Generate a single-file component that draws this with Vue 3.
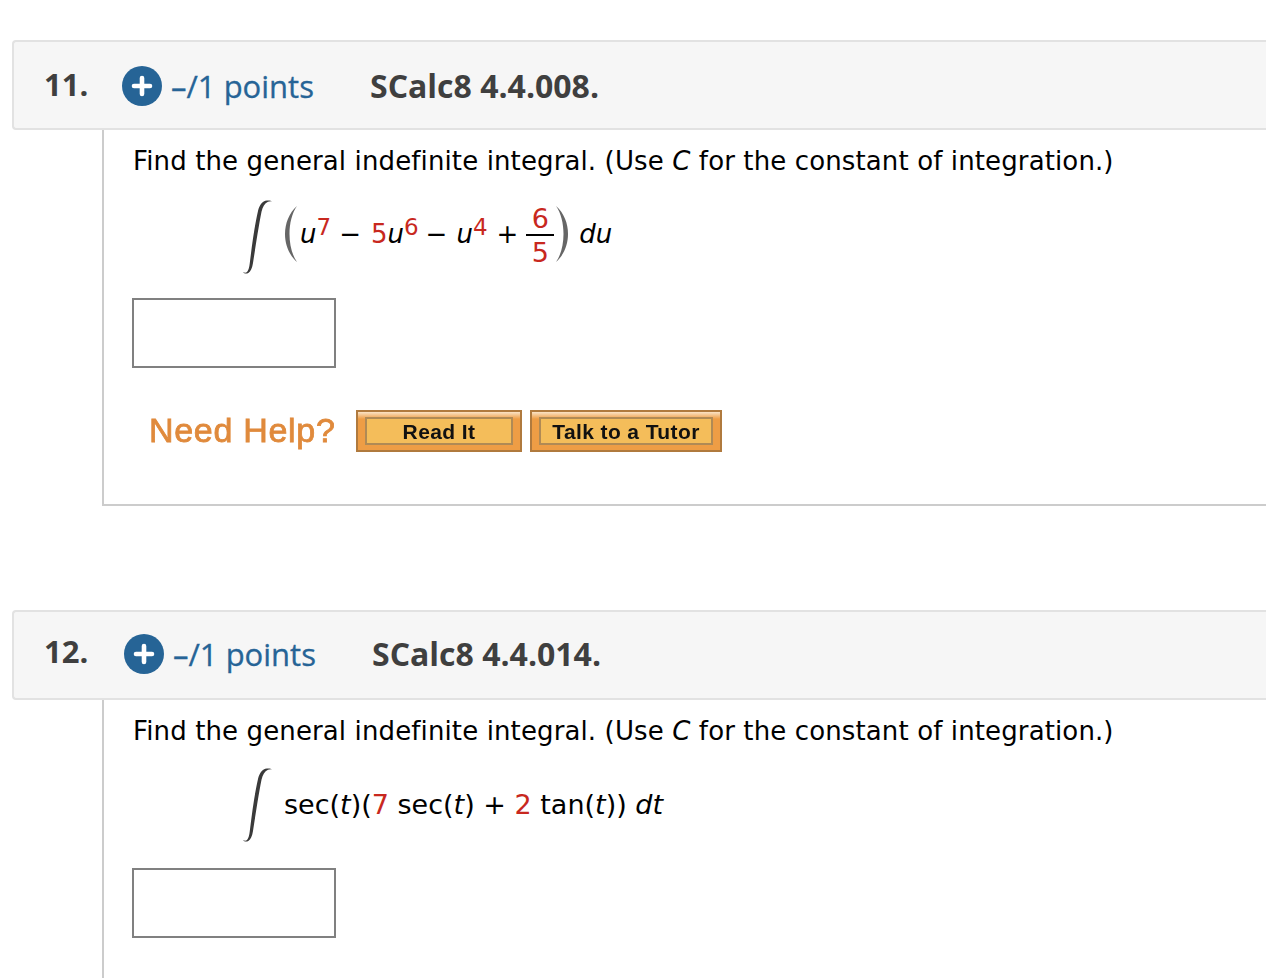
<script setup>
const questions = [
  { num: '11.', code: 'SCalc8 4.4.008.', kind: 'a' },
  { num: '12.', code: 'SCalc8 4.4.014.', kind: 'b' }
]
</script>

<template>
  <div class="page">
    <section v-for="q in questions" :key="q.num" class="question" :class="'q-' + q.kind">
      <header class="head">
        <span class="num">{{ q.num }}</span>
        <svg class="plus" width="40" height="40" viewBox="0 0 40 40">
          <circle cx="20" cy="20" r="20" fill="#266496" />
          <path d="M20 12v16M12 20h16" stroke="#fff" stroke-width="4.6" stroke-linecap="round" />
        </svg>
        <span class="pts">–/1 points</span>
        <span class="code">{{ q.code }}</span>
      </header>
      <div class="body">
        <p class="prompt">Find the general indefinite integral. (Use <i>C</i> for the constant of integration.)</p>
        <div class="math">
          <svg class="integral" width="32" height="76" viewBox="0 0 32 76">
            <path d="M0 73c1.500 1 3 1 4 0 1.500-1.500 2.300-5 2.800-9C9 46 11.500 27 15 12c1.500-6 4-10 9-10.500 2-.2 4 0 5 .8-1.500-.2-3 0-4 .5-3.500 1.500-5.200 5-6.500 10C15.500 28 12.500 48 10 64c-.8 5-2.200 8.500-4.700 10-2 1-4 .8-5.300-1z" fill="#3a3a3a" />
          </svg>
          <div v-if="q.kind === 'a'" class="expr">
            <svg class="paren open" width="14" height="58" viewBox="0 0 14 58"><path d="M13 1C-3 15-3 43 13 57 3 43 3 15 13 1z" fill="#666" /></svg>
            <i>u</i><sup class="red">7</sup>
            <span class="op">−</span>
            <span class="red">5</span><i>u</i><sup class="red">6</sup>
            <span class="op op2">−</span>
            <i>u</i><sup class="red">4</sup>
            <span class="op plus-op">+</span>
            <span class="frac"><span class="red">6</span><span class="red bar">5</span></span>
            <svg class="paren close" width="14" height="58" viewBox="0 0 14 58"><path d="M1 1C17 15 17 43 1 57 11 43 11 15 1 1z" fill="#666" /></svg>
            <i class="d">du</i>
          </div>
          <div v-else class="expr expr-b">
            <span>sec(<i>t</i>)(<span class="red">7</span> sec(<i>t</i>) + <span class="red">2</span> tan(<i>t</i>)) <i>dt</i></span>
          </div>
        </div>
        <div class="answer"></div>
        <div v-if="q.kind === 'a'" class="help">
          <span class="need">Need Help?</span>
          <button class="btn read"><span>Read It</span></button>
          <button class="btn tutor"><span>Talk to a Tutor</span></button>
        </div>
      </div>
    </section>
  </div>
</template>

<style>
html, body { margin: 0; background: #fff; overflow: hidden; }
</style>

<style scoped>
.page { width: 1266px; height: 978px; overflow: hidden; padding-top: 40px; box-sizing: border-box; }
.question { margin-bottom: 104px; }
.head {
  margin-left: 12px;
  height: 90px;
  box-sizing: border-box;
  background: #f6f6f6;
  border: 2px solid #e2e2e2;
  border-right: 0;
  border-radius: 4px 0 0 4px;
  display: flex;
  align-items: center;
  font-family: "Open Sans", sans-serif;
  font-size: 31px;
}
.num { width: 78px; margin-left: 30px; margin-top: -2px; font-weight: 700; color: #3f3f3f; }
.plus { margin-top: 2px; flex: none; }
.pts { margin-left: 9px; margin-top: 2px; width: 199px; color: #266496; font-weight: 500; white-space: nowrap; -webkit-text-stroke: .3px #266496; }
.code { font-weight: 700; font-size: 32px; color: #3f3f3f; white-space: nowrap; margin-top: 0; }
.q-b .num { width: 80px; margin-top: -8px; }
.q-b .plus { margin-top: -2px; }
.q-b .pts { margin-top: -2px; }
.q-b .code { margin-top: -4px; }
.body {
  margin-left: 102px;
  border-left: 2px solid #ccc;
  padding: 14px 0 0 29px;
  font-family: "DejaVu Sans", Verdana, sans-serif;
  color: #000;
  box-sizing: border-box;
}
.q-a .body { height: 376px; border-bottom: 2px solid #ccc; }
.q-b .body { height: 300px; }
.prompt { margin: 0; font-size: 26px; line-height: 34px; white-space: nowrap; letter-spacing: .12px; }
.math { margin: 21px 0 0 110px; height: 86px; display: flex; align-items: flex-start; }
.q-b .math { margin-top: 19px; height: 88px; }
.integral { flex: none; }
.expr { margin-left: 9px; display: flex; align-items: center; height: 70px; font-size: 26px; white-space: pre; }
.expr-b { margin-left: 9px; height: 74px; font-size: 27px; }
.expr i { font-style: italic; }
.red { color: #c8281e; }
sup { font-size: 23px; line-height: 1; margin: -14px 0 0 0; align-self: center; }
.op { margin: 0 10px 0 8px; }
.op2 { margin: 0 9px 0 7px; }
.plus-op { margin-left: 9px; }
.paren { flex: none; }
.open { margin-right: 2px; }
.close { margin: 0 2px 0 1px; }
.frac { display: inline-flex; flex-direction: column; align-items: center; margin: 5px 0 0 -2px; line-height: 30px; width: 28px; font-size: 27px; }
.bar { border-top: 2px solid #000; width: 28px; text-align: center; line-height: 33px; }
.d { margin-left: 8px; }
.answer { width: 204px; height: 70px; box-sizing: border-box; border: 2px solid #808080; margin: 13px 0 0 -1px; background: #fff; }
.help { display: flex; align-items: flex-start; margin-top: 42px; margin-left: 16px; }
.need { font-family: "Liberation Sans", Arial, sans-serif; font-size: 34px; line-height: 40px; color: #e08a3c; width: 207px; white-space: nowrap; letter-spacing: .7px; -webkit-text-stroke: .8px #e08a3c; filter: blur(.4px); }
.btn {
  height: 42px;
  padding: 5px 7px;
  box-sizing: border-box;
  background: linear-gradient(#fae3c6 0, #ee9d45 7px);
  border: 2px solid #b07a3e;
  display: block;
  margin-right: 8px;
}
.btn span {
  display: block;
  height: 28px;
  padding-top: 2px;
  box-sizing: border-box;
  border: 2px solid #b08a55;
  background: #f4bd5a;
  font-family: "Liberation Sans", Arial, sans-serif;
  font-weight: 700;
  font-size: 21px;
  line-height: 22px;
  color: #111;
  white-space: nowrap;
  letter-spacing: .4px;
  filter: blur(.3px);
}
.read { width: 166px; }
.tutor { width: 192px; }
</style>
